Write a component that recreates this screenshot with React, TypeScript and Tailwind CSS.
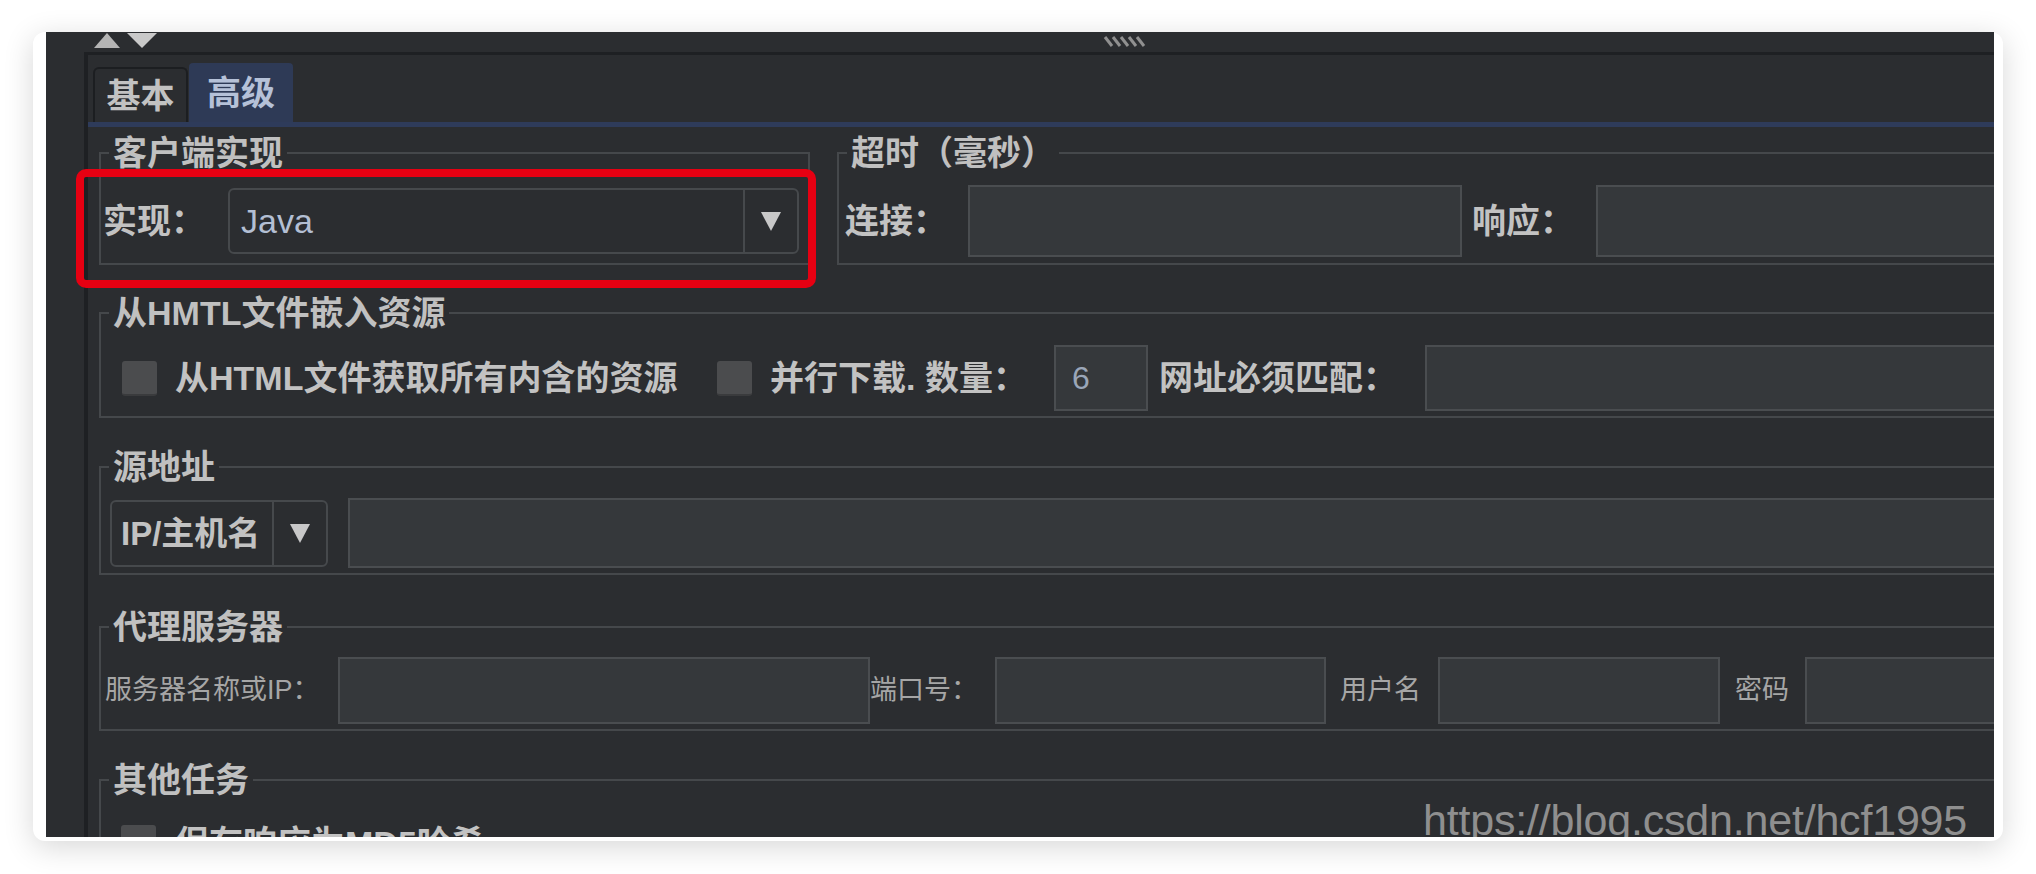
import React from 'react';

const label = 'shrink-0 whitespace-nowrap text-[34px] leading-none font-semibold text-[#c2c2c2]';
const small = 'shrink-0 whitespace-nowrap text-[27px] leading-none text-[#a6a6a6]';

const Caret = () => (
  <svg width="20" height="20" viewBox="0 0 20 20">
    <polygon points="0,1 20,1 10,20" fill="#c8c8c8" />
  </svg>
);

type BoxProps = {
  title: string;
  className?: string;
  bodyClassName?: string;
  children: React.ReactNode;
};

const Box = ({ title, className = '', bodyClassName = '', children }: BoxProps) => (
  <fieldset className={`min-w-0 border-2 border-[#45484b] ${className}`}>
    <legend className="ml-[8px] px-[4px] text-[34px] leading-[34px] font-semibold text-[#c0c0c0] whitespace-nowrap">
      {title}
    </legend>
    <div className={`flex items-center ${bodyClassName}`}>{children}</div>
  </fieldset>
);

const Input = ({ className = '', children }: { className?: string; children?: React.ReactNode }) => (
  <div className={`shrink-0 bg-[#35383b] border-2 border-[#4a4d50] flex items-center ${className}`}>
    {children}
  </div>
);

const Combo = ({ className = '', children }: { className?: string; children: React.ReactNode }) => (
  <div className={`shrink-0 flex rounded-[6px] border-2 border-[#46494c] ${className}`}>
    <div className="flex-1 flex items-center">{children}</div>
    <div className="w-[54px] border-l-2 border-[#46494c] flex items-center justify-center">
      <Caret />
    </div>
  </div>
);

const Check = () => (
  <div className="shrink-0 w-[35px] h-[35px] rounded-[3px] bg-[#4b4c4e] border-b-2 border-[#3a3b3d]" />
);

export default function App() {
  return (
    <div className="w-[2036px] h-[874px] bg-white overflow-hidden pt-[32px] pl-[33px] font-['Liberation_Sans','Noto_Sans_CJK_SC',sans-serif]">
      <div className="w-[1970px] h-[809px] rounded-[12px] bg-white pl-[13px] pr-[9px] pb-[4px] shadow-[0_6px_30px_rgba(0,0,0,0.16)]">
        <div className="relative w-full h-full bg-[#2b2d30] overflow-hidden">
          {/* splitter strip */}
          <div className="h-[20px] flex items-start">
            <svg className="ml-[48px] mt-[1px]" width="64" height="15" viewBox="0 0 64 15">
              <polygon points="0,15 26,15 13,0" fill="#b4b4b4" />
              <polygon points="33,0 63,0 48,15" fill="#c9c9c9" />
            </svg>
            <svg className="ml-[945px] mt-[4px]" width="44" height="11" viewBox="0 0 44 11">
              {[0, 1, 2, 3, 4].map((i) => (
                <line
                  key={i}
                  x1={2 + i * 8}
                  y1={1}
                  x2={9 + i * 8}
                  y2={10}
                  stroke="#909090"
                  strokeWidth="3"
                />
              ))}
            </svg>
          </div>

          <div className="ml-[38px] h-full border-l-4 border-t-[3px] border-[#1e2023]">
            {/* tabs */}
            <div className="h-[67px] flex items-end pt-[8px] pl-[5px]">
              <div className="w-[95px] h-[55px] rounded-t-[6px] border-2 border-b-0 border-[#1c1e21] flex items-center justify-center text-[34px] leading-none font-semibold text-[#c2c2c2]">
                基本
              </div>
              <div className="ml-[1px] w-[104px] h-[59px] rounded-t-[4px] bg-[#2e3a56] flex items-center justify-center text-[34px] leading-none font-semibold text-[#b5c1d8]">
                高级
              </div>
            </div>
            <div className="h-[5px] bg-[#2e3b5a]" />

            <div className="w-[1950px] pl-[11px] pt-[9px]">
              {/* row 1 */}
              <div className="flex">
                <Box title="客户端实现" className="w-[711px]" bodyClassName="h-[93px] pt-[15px] pb-[6px] pl-[2px] pr-[9px]">
                  <span className={`${label} w-[125px]`}>实现：</span>
                  <Combo className="w-[571px] h-[66px]">
                    <span className="pl-[11px] text-[34px] leading-none text-[#b3bfd3]">Java</span>
                  </Combo>
                </Box>
                <Box title="超时（毫秒）" className="ml-[27px] flex-1" bodyClassName="h-[93px] pt-[15px] pb-[6px] pl-[6px]">
                  <span className={`${label} w-[123px]`}>连接：</span>
                  <Input className="w-[494px] h-[72px]" />
                  <span className={`${label} ml-[10px] w-[124px]`}>响应：</span>
                  <Input className="flex-1 h-[72px]" />
                </Box>
              </div>

              {/* row 2 */}
              <Box title="从HMTL文件嵌入资源" className="mt-[31px]" bodyClassName="h-[86px] pt-[15px] pb-[5px] pl-[21px]">
                <Check />
                <span className={`${label} ml-[18px] w-[542px]`}>从HTML文件获取所有内含的资源</span>
                <Check />
                <span className={`${label} ml-[18px] w-[284px]`}>并行下载. 数量：</span>
                <Input className="w-[94px] h-[66px] pl-[16px]">
                  <span className="text-[32px] leading-none text-[#9aa6b8]">6</span>
                </Input>
                <span className={`${label} ml-[11px] w-[266px]`}>网址必须匹配：</span>
                <Input className="flex-1 h-[66px]" />
              </Box>

              {/* row 3 */}
              <Box title="源地址" className="mt-[32px]" bodyClassName="h-[89px] pt-[14px] pb-[5px] pl-[9px]">
                <Combo className="w-[218px] h-[67px]">
                  <span className="pl-[9px] text-[33px] leading-none font-semibold text-[#c2c2c2] whitespace-nowrap">
                    IP/主机名
                  </span>
                </Combo>
                <Input className="ml-[20px] flex-1 h-[70px]" />
              </Box>

              {/* row 4 */}
              <Box title="代理服务器" className="mt-[35px]" bodyClassName="h-[85px] pt-[13px] pb-[5px] pl-[4px]">
                <span className={`${small} w-[233px]`}>服务器名称或IP：</span>
                <Input className="w-[532px] h-[67px]" />
                <span className={`${small} w-[125px]`}>端口号：</span>
                <Input className="w-[331px] h-[67px]" />
                <span className={`${small} ml-[14px] w-[98px]`}>用户名</span>
                <Input className="w-[282px] h-[67px]" />
                <span className={`${small} ml-[15px] w-[70px]`}>密码</span>
                <Input className="flex-1 h-[67px]" />
              </Box>

              {/* row 5 */}
              <Box title="其他任务" className="mt-[32px]" bodyClassName="h-[86px] pt-[5px] pl-[20px]">
                <Check />
                <span className={`${label} ml-[19px]`}>保存响应为MD5哈希</span>
              </Box>
            </div>
          </div>

          {/* annotation */}
          <div className="absolute left-[30px] top-[137px] w-[740px] h-[119px] rounded-[10px] border-[8px] border-[#e60012]" />

          {/* watermark */}
          <div className="absolute left-[1377px] top-[767px] text-[43px] leading-[43px] tracking-[-0.2px] text-[#8f8f8f] whitespace-nowrap">
            https://blog.csdn.net/hcf1995
          </div>
        </div>
      </div>
    </div>
  );
}
